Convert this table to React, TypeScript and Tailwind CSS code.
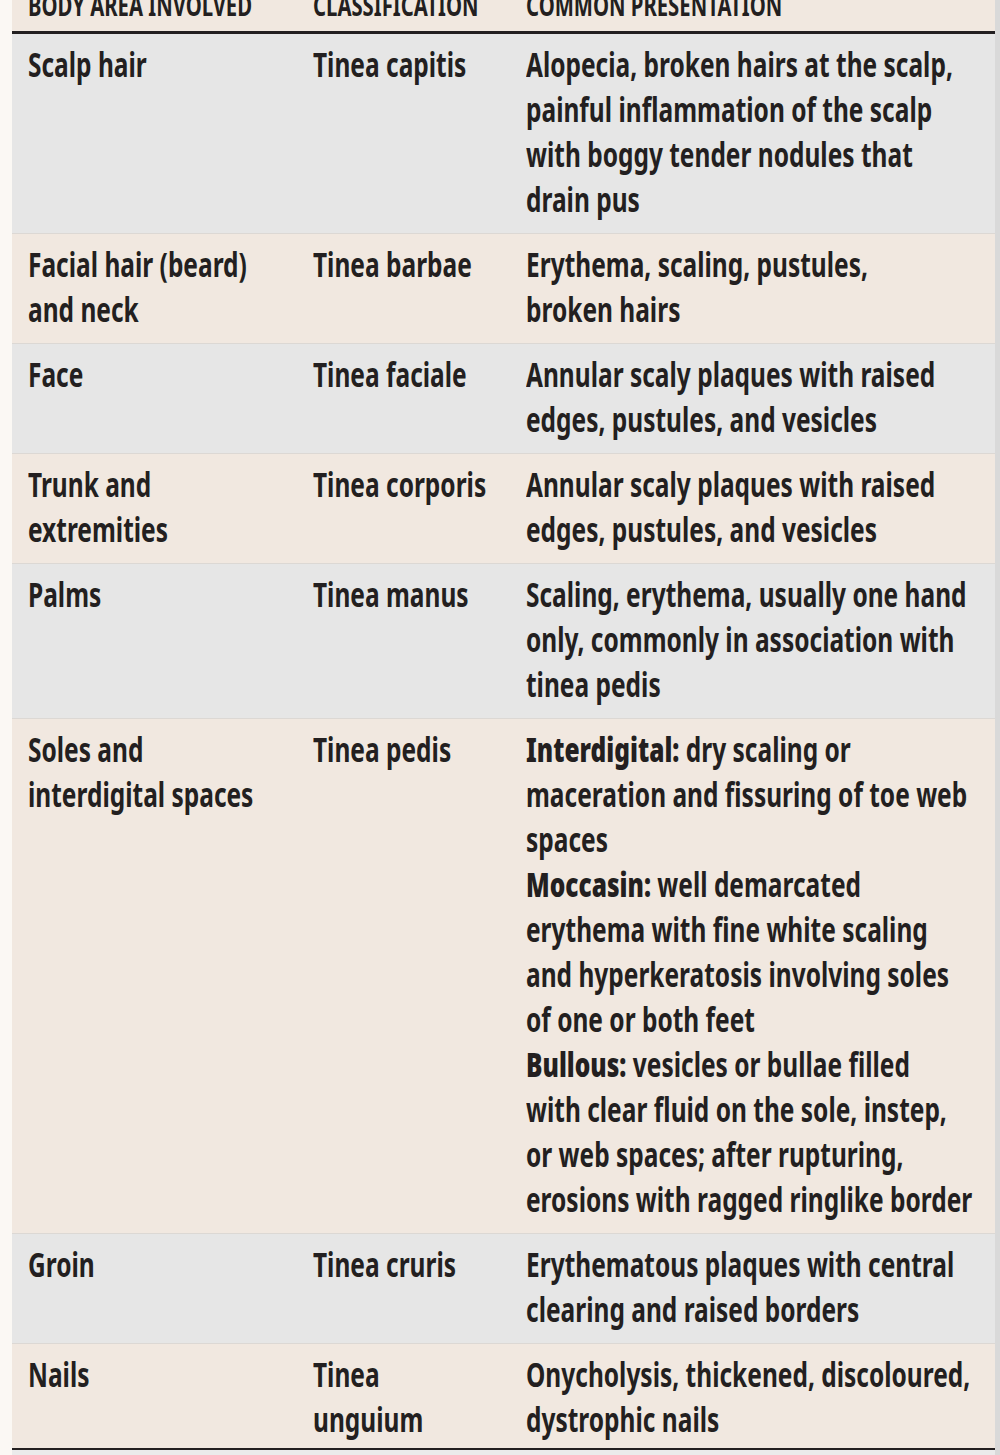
import React from "react";

type Cell = React.ReactNode[];
type Row = { area: Cell; cls: Cell; pres: Cell; bg: string };

const B = ({ children }: { children: React.ReactNode }) => (
  <span className="font-black">{children}</span>
);

const rows: Row[] = [
  {
    area: ["Scalp hair"],
    cls: ["Tinea capitis"],
    pres: [
      "Alopecia, broken hairs at the scalp,",
      "painful inflammation of the scalp",
      "with boggy tender nodules that",
      "drain pus",
    ],
    bg: "bg-[#e6e6e6]",
  },
  {
    area: ["Facial hair (beard)", "and neck"],
    cls: ["Tinea barbae"],
    pres: ["Erythema, scaling, pustules,", "broken hairs"],
    bg: "bg-[#f1e8e0]",
  },
  {
    area: ["Face"],
    cls: ["Tinea faciale"],
    pres: ["Annular scaly plaques with raised", "edges, pustules, and vesicles"],
    bg: "bg-[#e6e6e6]",
  },
  {
    area: ["Trunk and", "extremities"],
    cls: ["Tinea corporis"],
    pres: ["Annular scaly plaques with raised", "edges, pustules, and vesicles"],
    bg: "bg-[#f1e8e0]",
  },
  {
    area: ["Palms"],
    cls: ["Tinea manus"],
    pres: [
      "Scaling, erythema, usually one hand",
      "only, commonly in association with",
      "tinea pedis",
    ],
    bg: "bg-[#e6e6e6]",
  },
  {
    area: ["Soles and", "interdigital spaces"],
    cls: ["Tinea pedis"],
    pres: [
      <><B>Interdigital:</B> dry scaling or</>,
      "maceration and fissuring of toe web",
      "spaces",
      <><B>Moccasin:</B> well demarcated</>,
      "erythema with fine white scaling",
      "and hyperkeratosis involving soles",
      "of one or both feet",
      <><B>Bullous:</B> vesicles or bullae filled</>,
      "with clear fluid on the sole, instep,",
      "or web spaces; after rupturing,",
      "erosions with ragged ringlike border",
    ],
    bg: "bg-[#f1e8e0]",
  },
  {
    area: ["Groin"],
    cls: ["Tinea cruris"],
    pres: ["Erythematous plaques with central", "clearing and raised borders"],
    bg: "bg-[#e6e6e6]",
  },
  {
    area: ["Nails"],
    cls: ["Tinea", "unguium"],
    pres: ["Onycholysis, thickened, discoloured,", "dystrophic nails"],
    bg: "bg-[#f1e8e0]",
  },
];

// the print face is a condensed one, so lines are squeezed sideways
function Lines({ lines }: { lines: Cell }) {
  return (
    <div>
      {lines.map((l, i) => (
        <div key={i} className="whitespace-nowrap origin-left scale-x-[0.72]">
          {l}
        </div>
      ))}
    </div>
  );
}

export default function App() {
  return (
    <div
      className="flex w-[1000px] h-[1455px] bg-[#fbf8f4] text-[#231f20] overflow-hidden"
      style={{ fontFamily: '"Noto Sans", "DejaVu Sans", sans-serif' }}
    >
      <div className="w-[12px] shrink-0" />
      <div className="flex flex-col w-[983px]">
        {/* header, top of the text is cut off */}
        <div className="h-[31px] overflow-hidden bg-[#f1e8e0] grid grid-cols-[285px_213px_1fr] font-bold text-[29px] leading-[30px] uppercase">
          <div className="pl-4 -mt-[10px] whitespace-nowrap">
            <div className="origin-left scale-x-[0.7]">Body area involved</div>
          </div>
          <div className="pl-4 -mt-[10px] whitespace-nowrap">
            <div className="origin-left scale-x-[0.7]">Classification</div>
          </div>
          <div className="pl-4 -mt-[10px] whitespace-nowrap">
            <div className="origin-left scale-x-[0.7]">Common presentation</div>
          </div>
        </div>
        <div className="h-[3px] bg-[#231f20]" />
        {rows.map((r, i) => (
          <div
            key={i}
            className={`grid grid-cols-[285px_213px_1fr] font-bold text-[34px] leading-[45px] ${r.bg} ${
              i === 0 ? "pt-[8px] pb-[11px]" : i === rows.length - 1 ? "border-t border-[#dcd8d4] pt-[8px] pb-[6px]" : "border-t border-[#dcd8d4] pt-[8px] pb-[11px]"
            }`}
          >
            <div className="pl-4">
              <Lines lines={r.area} />
            </div>
            <div className="pl-4">
              <Lines lines={r.cls} />
            </div>
            <div className="pl-4">
              <Lines lines={r.pres} />
            </div>
          </div>
        ))}
        <div className="h-[2px] bg-[#231f20]" />
        <div className="flex-1 bg-[#ebebeb]" />
      </div>
      <div className="w-[5px] shrink-0 bg-[#d9d9d9]" />
    </div>
  );
}
